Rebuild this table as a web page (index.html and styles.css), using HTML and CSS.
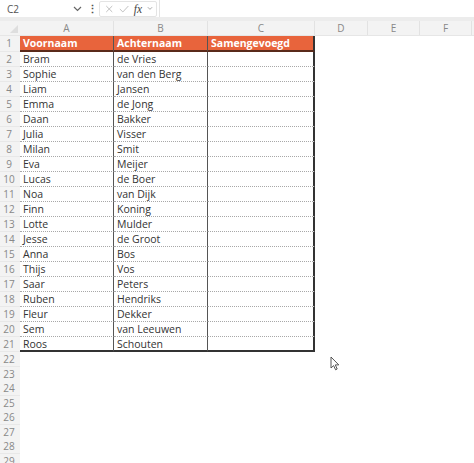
FILE: index.html
```html
<!DOCTYPE html>
<html>
<head>
<meta charset="utf-8">
<link rel="stylesheet" href="styles.css">
</head>
<body>
<div class="app">
  <div class="fbar">
    <div class="namebox"><span class="ref">C2</span><svg class="chev" width="9" height="6" viewBox="0 0 9 6"><path d="M1 1 L4.5 4.5 L8 1" fill="none" stroke="#666" stroke-width="1.2"/></svg></div>
    <div class="dots">⋮</div>
    <div class="fbtns">
      <svg width="10" height="10" viewBox="0 0 10 10"><path d="M1.5 1.5 L8.5 8.5 M8.5 1.5 L1.5 8.5" stroke="#bbb" stroke-width="1.1"/></svg>
      <svg width="12" height="10" viewBox="0 0 12 10"><path d="M1 5 L4.5 8.5 L11 1.5" fill="none" stroke="#bbb" stroke-width="1.1"/></svg>
      <span class="fx">fx</span>
      <svg width="7" height="5" viewBox="0 0 7 5"><path d="M1 1 L3.5 3.5 L6 1" fill="none" stroke="#999" stroke-width="1"/></svg>
    </div>
    <div class="finput"></div>
  </div>
  <div class="strip"></div>
  <div class="sheet">
    <div class="row colhdr">
      <div class="corner"><span class="tri"></span></div>
      <div class="ch">A</div><div class="ch">B</div><div class="ch">C</div><div class="ch">D</div><div class="ch">E</div><div class="ch">F</div><div class="ch last"></div>
    </div>
    <div class="row head">
      <div class="rh">1</div>
      <div class="c h a">Voornaam</div><div class="c h b">Achternaam</div><div class="c h cc">Samengevoegd</div><div class="e"></div>
    </div>
    <div class="row data"><div class="rh">2</div><div class="c a">Bram</div><div class="c b">de Vries</div><div class="c cc"></div><div class="e"></div></div>
    <div class="row data"><div class="rh">3</div><div class="c a">Sophie</div><div class="c b">van den Berg</div><div class="c cc"></div><div class="e"></div></div>
    <div class="row data"><div class="rh">4</div><div class="c a">Liam</div><div class="c b">Jansen</div><div class="c cc"></div><div class="e"></div></div>
    <div class="row data"><div class="rh">5</div><div class="c a">Emma</div><div class="c b">de Jong</div><div class="c cc"></div><div class="e"></div></div>
    <div class="row data"><div class="rh">6</div><div class="c a">Daan</div><div class="c b">Bakker</div><div class="c cc"></div><div class="e"></div></div>
    <div class="row data"><div class="rh">7</div><div class="c a">Julia</div><div class="c b">Visser</div><div class="c cc"></div><div class="e"></div></div>
    <div class="row data"><div class="rh">8</div><div class="c a">Milan</div><div class="c b">Smit</div><div class="c cc"></div><div class="e"></div></div>
    <div class="row data"><div class="rh">9</div><div class="c a">Eva</div><div class="c b">Meijer</div><div class="c cc"></div><div class="e"></div></div>
    <div class="row data"><div class="rh">10</div><div class="c a">Lucas</div><div class="c b">de Boer</div><div class="c cc"></div><div class="e"></div></div>
    <div class="row data"><div class="rh">11</div><div class="c a">Noa</div><div class="c b">van Dijk</div><div class="c cc"></div><div class="e"></div></div>
    <div class="row data"><div class="rh">12</div><div class="c a">Finn</div><div class="c b">Koning</div><div class="c cc"></div><div class="e"></div></div>
    <div class="row data"><div class="rh">13</div><div class="c a">Lotte</div><div class="c b">Mulder</div><div class="c cc"></div><div class="e"></div></div>
    <div class="row data"><div class="rh">14</div><div class="c a">Jesse</div><div class="c b">de Groot</div><div class="c cc"></div><div class="e"></div></div>
    <div class="row data"><div class="rh">15</div><div class="c a">Anna</div><div class="c b">Bos</div><div class="c cc"></div><div class="e"></div></div>
    <div class="row data"><div class="rh">16</div><div class="c a">Thijs</div><div class="c b">Vos</div><div class="c cc"></div><div class="e"></div></div>
    <div class="row data"><div class="rh">17</div><div class="c a">Saar</div><div class="c b">Peters</div><div class="c cc"></div><div class="e"></div></div>
    <div class="row data"><div class="rh">18</div><div class="c a">Ruben</div><div class="c b">Hendriks</div><div class="c cc"></div><div class="e"></div></div>
    <div class="row data"><div class="rh">19</div><div class="c a">Fleur</div><div class="c b">Dekker</div><div class="c cc"></div><div class="e"></div></div>
    <div class="row data"><div class="rh">20</div><div class="c a">Sem</div><div class="c b">van Leeuwen</div><div class="c cc"></div><div class="e"></div></div>
    <div class="row data lastrow"><div class="rh">21</div><div class="c a">Roos</div><div class="c b">Schouten</div><div class="c cc"></div><div class="e"></div></div>
    <div class="row empty"><div class="rh">22</div></div>
    <div class="row empty"><div class="rh">23</div></div>
    <div class="row empty"><div class="rh">24</div></div>
    <div class="row empty"><div class="rh">25</div></div>
    <div class="row empty"><div class="rh">26</div></div>
    <div class="row empty"><div class="rh">27</div></div>
    <div class="row empty"><div class="rh">28</div></div>
    <div class="row empty"><div class="rh">29</div></div>
  </div>
  <svg class="cursor" width="10" height="15" viewBox="0 0 10 15"><path d="M1 1 L1 12 L3.6 9.6 L5.6 13.8 L7.2 13 L5.3 8.9 L8.8 8.9 Z" fill="#fff" stroke="#444" stroke-width="0.9" stroke-linejoin="round"/></svg>
</div>
</body>
</html>
```
FILE: styles.css
```css
html, body { margin: 0; padding: 0; background: #fff; }
body { font-family: "Open Sans", "Liberation Sans", sans-serif; color: #333; }
.app { position: relative; width: 474px; height: 463px; overflow: hidden; }

.fbar { display: flex; align-items: center; height: 17px; background: #fff; }
.namebox { width: 86px; display: flex; align-items: center; justify-content: space-between; padding: 0 4px 0 7px; box-sizing: border-box; height: 17px; }
.ref { font-size: 10px; color: #555; }
.dots { width: 12px; text-align: center; font-size: 11px; color: #555; font-weight: bold; }
.fbtns { display: flex; align-items: center; gap: 5px; height: 16px; padding: 0 3px 0 5px; border: 1px solid #e4e4e4; border-radius: 2px; box-sizing: border-box; width: 58px; margin-left: 1px; }
.fx { font-family: "Liberation Serif", serif; font-style: italic; font-size: 11.5px; color: #444; }
.finput { flex: 1; height: 17px; border-left: 1px solid #e4e4e4; margin-left: 2px; }
.strip { height: 4px; background: #ececec; }

.sheet { display: flex; flex-direction: column; }
.row { display: grid; grid-template-columns: 20px 94px 94px 107px 53px 52px 52px 2px; }
.colhdr { height: 15px; background: #f3f3f3; border-bottom: 1px solid #e6e6e6; box-sizing: border-box; }
.corner { position: relative; }
.tri { position: absolute; right: 2px; bottom: 2px; width: 0; height: 0; border-left: 8px solid transparent; border-bottom: 8px solid #dedede; }
.ch { font-size: 10px; color: #888; text-align: center; line-height: 14px; border-right: 1px solid #e2e2e2; }
.ch.last { border-right: 0; }

.rh { font-size: 10px; color: #888; text-align: center; padding-right: 2px; background: #f3f3f3; border-bottom: 1px solid #e8e8e8; box-sizing: border-box; line-height: 14px; }
.head { height: 16px; }
.data { height: 15px; }
.empty { height: 14.5px; }
.empty .rh { line-height: 14px; }

.c { font-size: 10.5px; padding-left: 3px; line-height: 14px; white-space: nowrap; overflow: hidden; box-sizing: border-box; border-bottom: 1px dotted #a8a8a8; }
.c.a, .c.b { border-right: 1px solid #555; }
.c.cc { border-right: 2px solid #333; }
.h { background: #e8643c; color: #fff; font-weight: 700; border-bottom: 2px solid #5a2a1a; line-height: 14px; }
.lastrow .c { border-bottom: 2px solid #333; }

.cursor { position: absolute; left: 330px; top: 356px; }
```
